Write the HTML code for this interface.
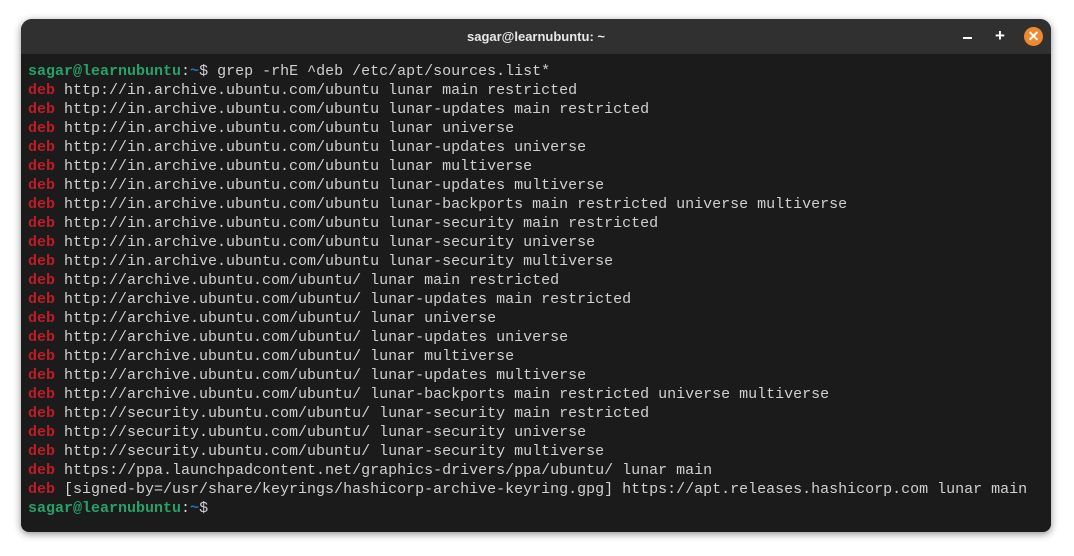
<!DOCTYPE html>
<html><head><style>
body{margin:0;width:1074px;height:556px;background:#fff;overflow:hidden;position:relative}
.win{position:absolute;left:21px;top:19px;width:1030px;height:513px;background:#1b1b1b;border-radius:11px 11px 8px 8px;box-shadow:0 2px 8px rgba(0,0,0,.45);overflow:hidden}
.tb{height:35px;background:#303030;position:relative;font:bold 13px "Liberation Sans",sans-serif;color:#e8e8e8;text-align:center;line-height:35px}
.min{position:absolute;left:942px;top:18px;width:9px;height:2px;background:#fff}
.plus{position:absolute;left:974px;top:8px;color:#fff;font:bold 17px "Liberation Sans",sans-serif;line-height:18px}
.cl{position:absolute;left:1003px;top:8px;width:19px;height:19px;border-radius:50%;background:#f0892e;color:#fff;font:bold 14px "Liberation Sans",sans-serif;line-height:19px;text-align:center}
pre{margin:0;position:absolute;left:7px;top:43px;font:15px/19px "Liberation Mono",monospace;color:#d0d0d0}
.r{color:#c01c28;font-weight:bold}.g{color:#26a269;font-weight:bold}.b{color:#2a6fbf;font-weight:bold}
</style></head><body>
<div class="win"><div class="tb">sagar@learnubuntu: ~<div class="min"></div><div class="plus">+</div><div class="cl">✕</div></div>
<pre><span class="g">sagar@learnubuntu</span>:<span class="b">~</span>$ grep -rhE ^deb /etc/apt/sources.list*
<span class="r">deb</span> http://in.archive.ubuntu.com/ubuntu lunar main restricted
<span class="r">deb</span> http://in.archive.ubuntu.com/ubuntu lunar-updates main restricted
<span class="r">deb</span> http://in.archive.ubuntu.com/ubuntu lunar universe
<span class="r">deb</span> http://in.archive.ubuntu.com/ubuntu lunar-updates universe
<span class="r">deb</span> http://in.archive.ubuntu.com/ubuntu lunar multiverse
<span class="r">deb</span> http://in.archive.ubuntu.com/ubuntu lunar-updates multiverse
<span class="r">deb</span> http://in.archive.ubuntu.com/ubuntu lunar-backports main restricted universe multiverse
<span class="r">deb</span> http://in.archive.ubuntu.com/ubuntu lunar-security main restricted
<span class="r">deb</span> http://in.archive.ubuntu.com/ubuntu lunar-security universe
<span class="r">deb</span> http://in.archive.ubuntu.com/ubuntu lunar-security multiverse
<span class="r">deb</span> http://archive.ubuntu.com/ubuntu/ lunar main restricted
<span class="r">deb</span> http://archive.ubuntu.com/ubuntu/ lunar-updates main restricted
<span class="r">deb</span> http://archive.ubuntu.com/ubuntu/ lunar universe
<span class="r">deb</span> http://archive.ubuntu.com/ubuntu/ lunar-updates universe
<span class="r">deb</span> http://archive.ubuntu.com/ubuntu/ lunar multiverse
<span class="r">deb</span> http://archive.ubuntu.com/ubuntu/ lunar-updates multiverse
<span class="r">deb</span> http://archive.ubuntu.com/ubuntu/ lunar-backports main restricted universe multiverse
<span class="r">deb</span> http://security.ubuntu.com/ubuntu/ lunar-security main restricted
<span class="r">deb</span> http://security.ubuntu.com/ubuntu/ lunar-security universe
<span class="r">deb</span> http://security.ubuntu.com/ubuntu/ lunar-security multiverse
<span class="r">deb</span> https://ppa.launchpadcontent.net/graphics-drivers/ppa/ubuntu/ lunar main
<span class="r">deb</span> [signed-by=/usr/share/keyrings/hashicorp-archive-keyring.gpg] https://apt.releases.hashicorp.com lunar main
<span class="g">sagar@learnubuntu</span>:<span class="b">~</span>$</pre>
</div>
</body></html>
